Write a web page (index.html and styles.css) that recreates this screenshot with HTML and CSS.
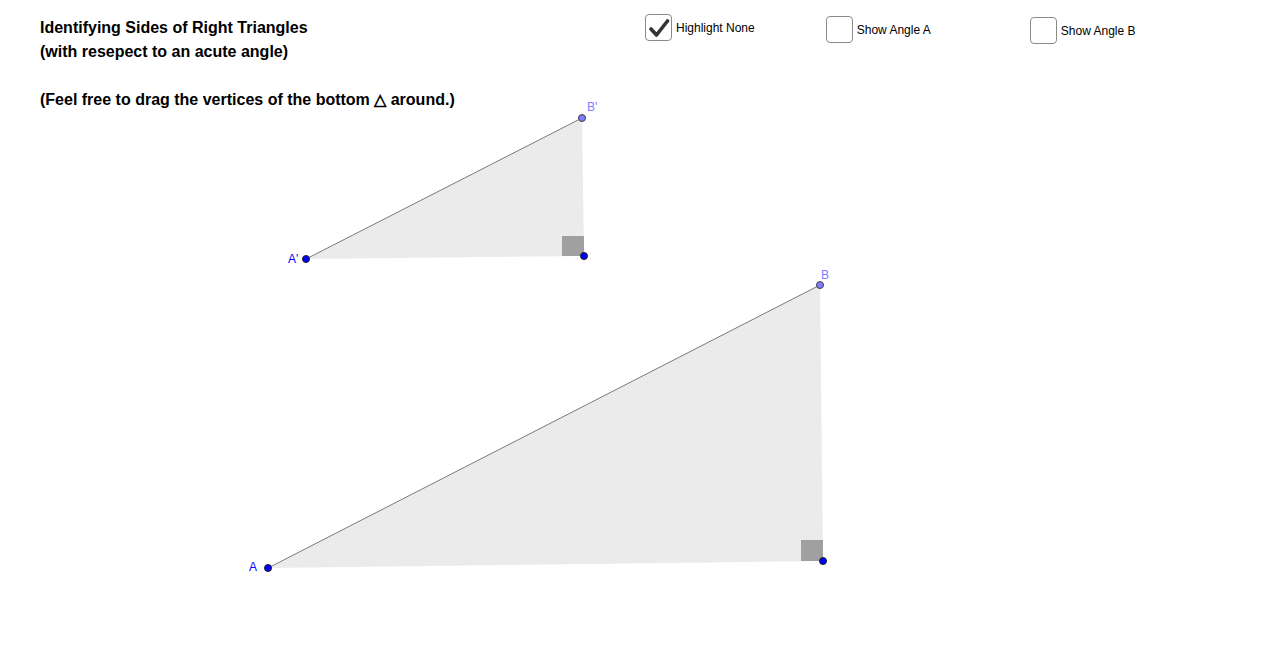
FILE: index.html
```html
<!DOCTYPE html>
<html>
<head>
<meta charset="utf-8">
<link rel="stylesheet" href="styles.css">
</head>
<body>
<div class="applet">
  <svg class="canvas" width="1280" height="672" viewBox="0 0 1280 672">
    <g class="tri">
      <polygon points="306,259 582,118 584,256" class="fill"/>
      <line x1="306" y1="259" x2="582" y2="118" class="hyp"/>
      <rect x="562" y="236" width="22" height="20" class="ra"/>
      <circle cx="306" cy="259" r="3.5" class="pt"/>
      <circle cx="582" cy="118" r="3.5" class="pt light"/>
      <circle cx="584" cy="256" r="3.5" class="pt"/>
      <text x="288" y="263" class="lbl">A'</text>
      <text x="587" y="111" class="lbl light">B'</text>
    </g>
    <g class="tri">
      <polygon points="268,568 820,285 823,561" class="fill"/>
      <line x1="268" y1="568" x2="820" y2="285" class="hyp"/>
      <rect x="801" y="540" width="22" height="21" class="ra"/>
      <circle cx="268" cy="568" r="3.5" class="pt"/>
      <circle cx="820" cy="285" r="3.5" class="pt light"/>
      <circle cx="823" cy="561" r="3.5" class="pt"/>
      <text x="249" y="571" class="lbl">A</text>
      <text x="821" y="279" class="lbl light">B</text>
    </g>
  </svg>
  <div class="intro">
    <p class="line">Identifying Sides of Right Triangles</p>
    <p class="line">(with resepect to an acute angle)</p>
    <p class="line gap">(Feel free to drag the vertices of the bottom △ around.)</p>
  </div>
  <div class="controls">
    <label class="cb cb1"><span class="box checked"><svg width="22" height="20" viewBox="0 0 22 20"><path d="M3 11 L8.5 17 L19.5 3" fill="none" stroke="#333" stroke-width="3.6" stroke-linecap="round" stroke-linejoin="round"/></svg></span><span class="txt">Highlight None</span></label>
    <label class="cb cb2"><span class="box"></span><span class="txt">Show Angle A</span></label>
    <label class="cb cb3"><span class="box"></span><span class="txt">Show Angle B</span></label>
  </div>
</div>
</body>
</html>
```

FILE: styles.css
```css
html, body {
  margin: 0;
  padding: 0;
  background: #fff;
}
.applet {
  position: relative;
  width: 1280px;
  height: 672px;
  overflow: hidden;
  font-family: "Liberation Sans", Arial, sans-serif;
}
.canvas {
  position: absolute;
  left: 0;
  top: 0;
}
.fill {
  fill: #ebebeb;
  stroke: none;
}
.hyp {
  stroke: #7a7a7a;
  stroke-width: 1;
}
.ra {
  fill: #a0a0a0;
}
.pt {
  fill: #0000ff;
  stroke: #202020;
  stroke-width: 1;
}
.pt.light {
  fill: #7d7dff;
  stroke: #404040;
}
.lbl {
  font-family: "Liberation Sans", Arial, sans-serif;
  font-size: 12px;
  fill: #0000ff;
}
.lbl.light {
  fill: #7d7dff;
}
.intro {
  position: relative;
  padding: 16px 0 0 40px;
}
.line {
  margin: 0;
  font-size: 16px;
  font-weight: bold;
  line-height: 24px;
  color: #000;
}
.line.gap {
  margin-top: 24px;
}
.controls {
  position: absolute;
  top: 14px;
  left: 645px;
  display: flex;
  align-items: flex-start;
}
.cb {
  display: flex;
  align-items: center;
  gap: 4px;
  font-size: 12px;
  color: #000;
}
.cb2 { margin-left: 71px; margin-top: 2px; }
.cb3 { margin-left: 99px; margin-top: 3px; }
.box {
  width: 25px;
  height: 25px;
  border: 1px solid #8a8a8a;
  border-radius: 4px;
  background: #fff;
  display: flex;
  align-items: center;
  justify-content: center;
  box-sizing: content-box;
}
.txt {
  white-space: nowrap;
}
```
